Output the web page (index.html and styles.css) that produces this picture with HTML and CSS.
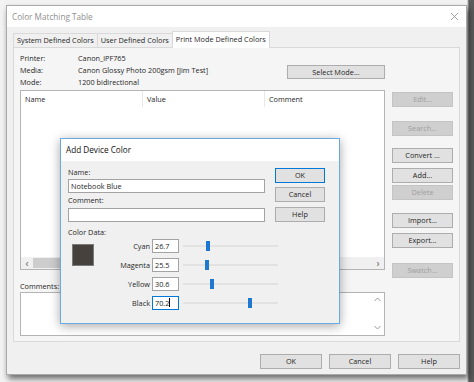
FILE: index.html
```html
<!DOCTYPE html>
<html lang="en">
<head>
  <meta charset="UTF-8" />
  <title>Color Matching Table</title>
  <link rel="stylesheet" href="styles.css">
</head>
<body>
  <div class="window">
    <div class="titlebar">
      <span class="title">Color Matching Table</span>
      <svg class="close" width="9" height="9" viewBox="0 0 9 9">
        <path d="M1 1 L8 8 M8 1 L1 8" stroke="#8a8a8a" stroke-width="0.8" />
      </svg>
    </div>
    <div class="client">
      <div class="tabs">
        <div class="tab">System Defined Colors</div>
        <div class="tab">User Defined Colors</div>
        <div class="tab active">Print Mode Defined Colors</div>
      </div>
      <div class="panel">
        <div class="info">
          <div class="info-grid">
            <span>Printer:</span><span>Canon_iPF765</span>
            <span>Media:</span><span>Canon Glossy Photo 200gsm [Jim Test]</span>
            <span>Mode:</span><span>1200 bidirectional</span>
          </div>
          <button class="btn select-mode">Select Mode...</button>
        </div>
        <div class="main">
          <div class="list">
            <div class="list-head">
              <span>Name</span><span>Value</span><span>Comment</span>
            </div>
            <div class="list-body"></div>
            <div class="hscroll">
              <span class="arrow">&lsaquo;</span>
              <div class="thumb"></div>
              <span class="arrow right">&rsaquo;</span>
            </div>
          </div>
          <div class="side-buttons">
            <button class="btn disabled edit">Edit...</button>
            <button class="btn disabled search">Search...</button>
            <button class="btn convert">Convert ...</button>
            <button class="btn add">Add...</button>
            <button class="btn disabled delete">Delete</button>
            <button class="btn import">Import...</button>
            <button class="btn export">Export...</button>
            <button class="btn disabled swatch-btn">Swatch...</button>
          </div>
        </div>
        <div class="comments-label">Comments:</div>
        <div class="comments-box">
          <div class="vscroll">
            <svg width="7" height="5" viewBox="0 0 7 5"><path d="M0.5 4 L3.5 1 L6.5 4" fill="none" stroke="#9a9a9a" /></svg>
            <svg width="7" height="5" viewBox="0 0 7 5"><path d="M0.5 1 L3.5 4 L6.5 1" fill="none" stroke="#9a9a9a" /></svg>
          </div>
        </div>
      </div>
      <div class="footer">
        <button class="btn wide">OK</button>
        <button class="btn wide">Cancel</button>
        <button class="btn wide">Help</button>
      </div>
    </div>
  </div>

  <div class="dialog">
    <div class="dialog-title">Add Device Color</div>
    <div class="dialog-body">
      <div class="dialog-top">
        <div class="form">
          <div class="label">Name:</div>
          <div class="input">Notebook Blue</div>
          <div class="label comment-label">Comment:</div>
          <div class="input comment-input"></div>
        </div>
        <div class="dialog-buttons">
          <button class="btn default">OK</button>
          <button class="btn cancel">Cancel</button>
          <button class="btn help">Help</button>
        </div>
      </div>
      <div class="label color-label">Color Data:</div>
      <div class="color-data">
        <div class="swatch"></div>
        <div class="channels">
          <div class="channel">
            <span class="channel-name">Cyan</span>
            <div class="input small">26.7</div>
            <div class="slider"><div class="track"></div><div class="knob" style="left: calc(26.7% - 2px)"></div></div>
          </div>
          <div class="channel">
            <span class="channel-name">Magenta</span>
            <div class="input small">25.5</div>
            <div class="slider"><div class="track"></div><div class="knob" style="left: calc(25.5% - 2px)"></div></div>
          </div>
          <div class="channel">
            <span class="channel-name">Yellow</span>
            <div class="input small">30.6</div>
            <div class="slider"><div class="track"></div><div class="knob" style="left: calc(30.6% - 2px)"></div></div>
          </div>
          <div class="channel">
            <span class="channel-name">Black</span>
            <div class="input small focused">70.2<span class="caret"></span></div>
            <div class="slider"><div class="track"></div><div class="knob" style="left: calc(70.2% - 2px)"></div></div>
          </div>
        </div>
      </div>
    </div>
  </div>
</body>
</html>
```

FILE: styles.css
```css
* {
  box-sizing: border-box;
}

body {
  margin: 0;
  width: 474px;
  height: 382px;
  overflow: hidden;
  position: relative;
  font-family: 'Open Sans', 'Noto Sans', sans-serif;
  font-size: 7.3px;
  color: #262626;
  background: linear-gradient(to right, #f3f3f3 467px, #5c5c5c 469px);
}

.window {
  margin: 5px 0 0 6px;
  width: 461px;
  height: 370px;
  border: 1px solid #a9a9a9;
  background: #f0f0f0;
  box-shadow: 2px 4px 6px rgba(0, 0, 0, 0.55);
  display: flex;
  flex-direction: column;
}

.titlebar {
  height: 21px;
  background: #fff;
  display: flex;
  align-items: center;
  padding-left: 5px;
}

.title {
  color: #8f8f8f;
  font-size: 8.2px;
}

.close {
  margin-left: auto;
  margin-right: 7px;
}

.client {
  flex: 1;
  padding: 4px 6px 0 6px;
}

.tabs {
  display: flex;
  align-items: flex-end;
  height: 17px;
  margin-bottom: -1px;
  position: relative;
  z-index: 1;
}

.tab {
  height: 14px;
  line-height: 13px;
  padding: 0 3px;
  margin-bottom: 1px;
  margin-right: -1px;
  border: 1px solid #d9d9d9;
  border-bottom: none;
  background: #f0f0f0;
}

.tab.active {
  height: 17px;
  line-height: 15px;
  margin-bottom: 0;
  background: #fff;
}

.panel {
  height: 295px;
  border: 1px solid #d9d9d9;
  background: #f5f5f5;
  padding: 4px 6px 0 6px;
}

.info {
  width: 365px;
  height: 36px;
  margin-bottom: 2px;
  display: flex;
}

.info-grid {
  display: grid;
  grid-template-columns: 58px auto;
  line-height: 12px;
}

.btn {
  display: block;
  height: 15px;
  padding: 0;
  border: 1px solid #adadad;
  background: #e1e1e1;
  font-family: inherit;
  font-size: inherit;
  color: #262626;
  line-height: 13px;
  text-align: center;
}

.btn.disabled {
  background: #cfcfcf;
  border-color: #c4c4c4;
  color: #9e9e9e;
}

.select-mode {
  margin-left: auto;
  margin-top: 13px;
  width: 98px;
  height: 14px;
  line-height: 12px;
}

.main {
  display: flex;
  gap: 7px;
  height: 188px;
}

.list {
  width: 365px;
  height: 180px;
  border: 1px solid #b4b4b4;
  background: #fff;
  display: flex;
  flex-direction: column;
}

.list-head {
  height: 16px;
  display: grid;
  grid-template-columns: 122px 122px 1fr;
  line-height: 16px;
}

.list-head span {
  padding-left: 4px;
  border-right: 1px solid #e8e8e8;
}

.list-head span:last-child {
  border-right: none;
}

.list-body {
  flex: 1;
}

.hscroll {
  height: 12px;
  background: #f0f0f0;
  display: flex;
  align-items: center;
}

.arrow {
  width: 12px;
  text-align: center;
  font-size: 10px;
  line-height: 12px;
  color: #606060;
}

.thumb {
  width: 300px;
  height: 10px;
  background: #cdcdcd;
}

.arrow.right {
  margin-left: auto;
}

.side-buttons {
  width: 61px;
  display: flex;
  flex-direction: column;
}

.side-buttons .btn {
  width: 61px;
}

.edit { margin-top: 2px; }
.search { margin-top: 14px; }
.convert { margin-top: 12px; }
.add { margin-top: 5px; }
.delete { margin-top: 2px; }
.import { margin-top: 13px; }
.export { margin-top: 5px; }
.swatch-btn { margin-top: 15px; }

.comments-label {
  margin-top: 2px;
  line-height: 12px;
}

.comments-box {
  width: 365px;
  height: 44px;
  border: 1px solid #b4b4b4;
  background: #fff;
  display: flex;
  justify-content: flex-end;
}

.vscroll {
  width: 13px;
  display: flex;
  flex-direction: column;
  justify-content: space-between;
  align-items: center;
  padding: 4px 0 5px;
}

.footer {
  display: flex;
  justify-content: flex-end;
  gap: 7px;
  margin-top: 12px;
}

.btn.wide {
  width: 62px;
}

/* Add Device Color dialog */
.dialog {
  position: absolute;
  left: 60px;
  top: 138px;
  width: 280px;
  height: 186px;
  border: 1px solid #6aaae0;
  background: #f0f0f0;
  box-shadow: 0 2px 10px rgba(0, 0, 0, 0.35);
}

.dialog-title {
  height: 22px;
  line-height: 22px;
  background: #fff;
  padding-left: 5px;
  font-size: 8.2px;
  color: #111;
}

.dialog-body {
  padding: 5px 0 0 7px;
}

.dialog-top {
  display: flex;
  gap: 10px;
}

.form {
  width: 197px;
}

.label {
  line-height: 12px;
}

.input {
  height: 14px;
  border: 1px solid #a3a3a3;
  background: #fff;
  padding-left: 2px;
  line-height: 12px;
  margin-top: 1px;
}

.comment-label {
  margin-top: 1px;
}

.comment-input {
  margin-top: 2px;
}

.color-label {
  margin-top: 4px;
}

.dialog-buttons {
  width: 50px;
  padding-top: 2px;
}

.dialog-buttons .btn {
  width: 50px;
}

.btn.default {
  border-color: #0078d7;
}

.cancel { margin-top: 4px; }
.help { margin-top: 5px; }

.color-data {
  display: flex;
  padding-top: 1px;
}

.swatch {
  width: 22px;
  height: 22px;
  margin: 5px 0 0 4px;
  background: #46413d;
  border: 1px solid #7a7a7a;
}

.channel {
  display: flex;
  height: 19px;
}

.channel-name {
  width: 56px;
  text-align: right;
  line-height: 14px;
}

.input.small {
  width: 27px;
  margin: 0 0 0 2px;
}

.input.focused {
  border-color: #0078d7;
}

.caret {
  display: inline-block;
  width: 1px;
  height: 9px;
  background: #000;
  vertical-align: -1px;
}

.slider {
  position: relative;
  width: 95px;
  height: 14px;
  margin-left: 4px;
}

.track {
  position: absolute;
  left: 0;
  right: 0;
  top: 6px;
  height: 2px;
  background: #e2e2e2;
}

.knob {
  position: absolute;
  top: 2px;
  width: 4px;
  height: 10px;
  background: #1e78d0;
}
```
